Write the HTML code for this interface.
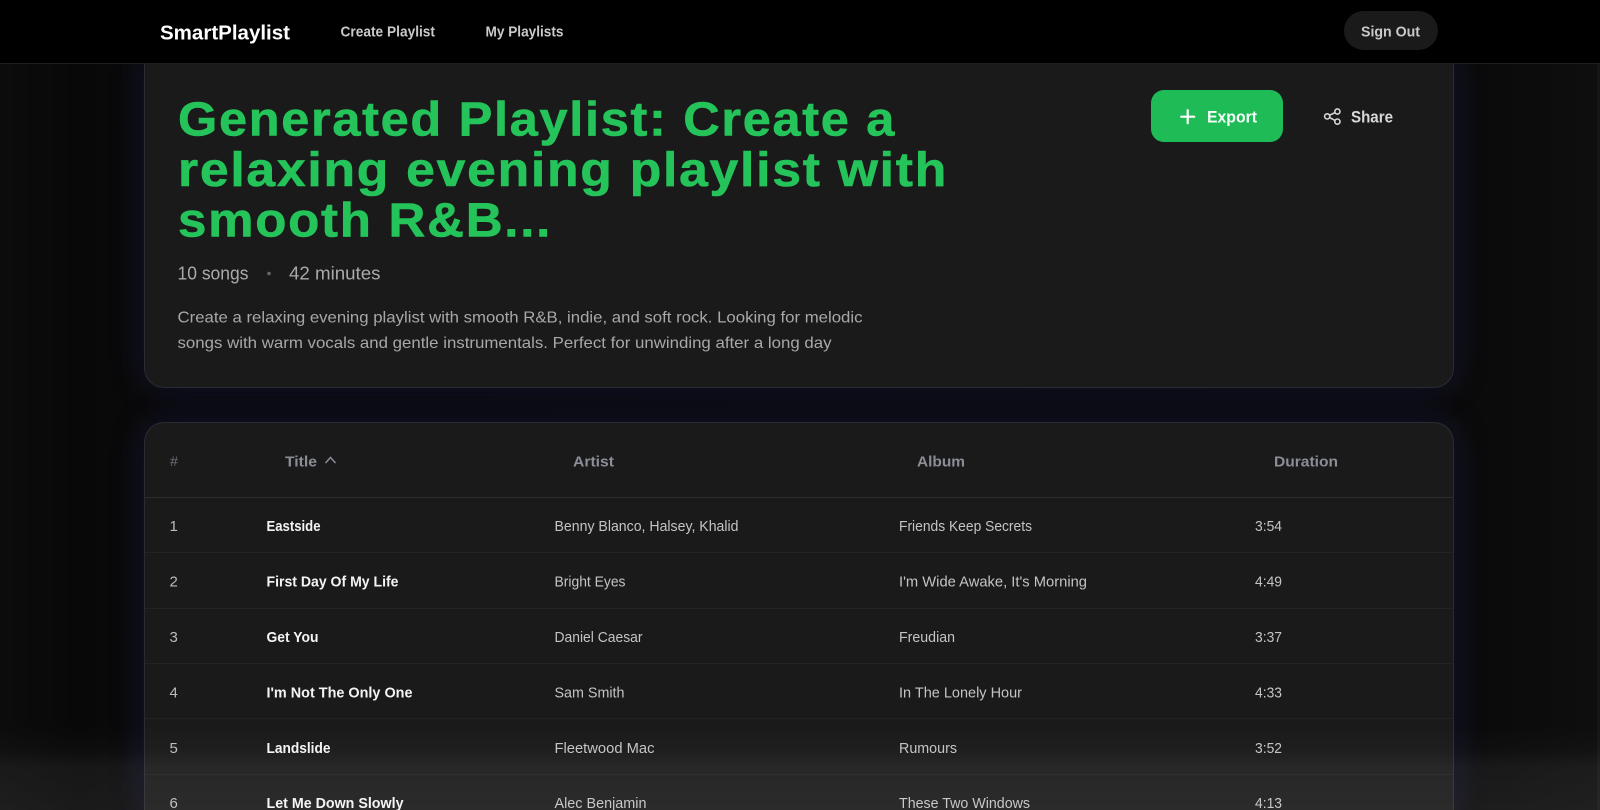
<!DOCTYPE html>
<html lang="en"><head><meta charset="utf-8"><title>SmartPlaylist</title>
<style>
html,body{margin:0;padding:0;width:1600px;height:810px;overflow:hidden;background:#0a0a0a}
body{position:relative;font-family:"Liberation Sans",sans-serif}
.bg{position:absolute;inset:0;background:linear-gradient(90deg,#0c0c0c 0,#080808 80px,#0a0a0a 140px,#0b0b0b 1500px,#0e0e0e 1597px,#151515 1597px)}
.card{position:absolute;left:144px;width:1310px;box-sizing:border-box;background:#1a1a1a;border:1px solid #2b2b33;border-radius:20px;box-shadow:0 0 34px rgba(45,45,150,.27)}
.nav{position:absolute;left:0;top:0;width:1600px;height:64px;background:#000;border-bottom:1px solid #1e1e1e;box-sizing:border-box}
.ov{position:absolute;left:0;top:725px;width:1600px;height:85px;background:linear-gradient(180deg,rgba(255,255,255,0) 0,rgba(255,255,255,.02) 25px,rgba(255,255,255,.06) 42px,rgba(255,255,255,.075) 85px)}
svg{position:absolute;left:0;top:0;overflow:hidden}
text{font-family:"Liberation Sans",sans-serif}
.t{font-weight:700;font-size:48px;fill:#25c45a;letter-spacing:1.6px;stroke:#25c45a;stroke-width:.6px}
.m{font-size:18px;fill:#aaaaaa}
.d{font-size:16px;fill:#a8a8a8}
.h{font-size:14.5px;font-weight:700;fill:#8b8e97}
.n{font-size:15px;fill:#bcbcbc}
.b{font-size:15px;font-weight:700;fill:#f4f4f4}
.r{font-size:15px;fill:#c4c4c4}
.nl{font-size:15px;font-weight:700;fill:#cacaca}
</style></head><body>
<div class="bg"></div>
<div class="card" style="top:44px;height:344px"></div>
<div class="card" style="top:422px;height:388px;border-bottom:0;border-radius:20px 20px 0 0"></div>
<svg width="1600" height="810" viewBox="0 0 1600 810" xmlns="http://www.w3.org/2000/svg">
<text class="t" x="178" y="135.5" textLength="718" lengthAdjust="spacingAndGlyphs">Generated Playlist: Create a</text>
<text class="t" x="178" y="186" textLength="770" lengthAdjust="spacingAndGlyphs">relaxing evening playlist with</text>
<text class="t" x="178" y="236.5" textLength="374" lengthAdjust="spacingAndGlyphs">smooth R&amp;B...</text>
<text class="m" x="177.5" y="279.5" textLength="71" lengthAdjust="spacingAndGlyphs">10 songs</text>
<circle cx="269" cy="273.5" r="1.8" fill="#666"/>
<text class="m" x="289" y="279.5" textLength="91.5" lengthAdjust="spacingAndGlyphs">42 minutes</text>
<text class="d" x="177.5" y="322.5" textLength="685" lengthAdjust="spacingAndGlyphs">Create a relaxing evening playlist with smooth R&amp;B, indie, and soft rock. Looking for melodic</text>
<text class="d" x="177.5" y="348" textLength="654" lengthAdjust="spacingAndGlyphs">songs with warm vocals and gentle instrumentals. Perfect for unwinding after a long day</text>

<rect x="1151" y="90" width="132" height="52" rx="13" fill="#1fbb57"/>
<path d="M1187.7 110.2v13M1181.2 116.7h13" stroke="#fff" stroke-width="2.2" stroke-linecap="round" fill="none"/>
<text x="1207" y="122.5" font-size="17" font-weight="700" fill="#f4fff8" textLength="50" lengthAdjust="spacingAndGlyphs">Export</text>
<g fill="none" stroke="#d6d6d6" stroke-width="1.6"><circle cx="1337.4" cy="111.5" r="2.6"/><circle cx="1327.2" cy="116.4" r="2.6"/><circle cx="1337.4" cy="121.6" r="2.6"/><path d="M1329.6 115.2l5.4-2.6M1329.6 117.6l5.4 2.8"/></g>
<text x="1351" y="122.5" font-size="17" font-weight="700" fill="#d8d8d8" textLength="42" lengthAdjust="spacingAndGlyphs">Share</text>

<text x="170" y="466" font-size="13.5" fill="#6d7078" textLength="8" lengthAdjust="spacingAndGlyphs">#</text>
<text class="h" x="285" y="466.5" textLength="32" lengthAdjust="spacingAndGlyphs">Title</text>
<path d="M325.5 463l5-5.5 5 5.5" stroke="#8b8e97" stroke-width="1.5" fill="none"/>
<text class="h" x="573" y="466.5" textLength="41" lengthAdjust="spacingAndGlyphs">Artist</text>
<text class="h" x="917" y="466.5" textLength="48" lengthAdjust="spacingAndGlyphs">Album</text>
<text class="h" x="1274" y="466.5" textLength="64" lengthAdjust="spacingAndGlyphs">Duration</text>

<g stroke-width="1">
<path d="M145 497.5H1453" stroke="#2e2e2e"/>
<path d="M145 552.5H1453M145 608.5H1453M145 663.5H1453M145 718.5H1453M145 774.5H1453" stroke="#232323"/>
</g>

<text class="n" x="169.5" y="531">1</text>
<text class="b" x="266.5" y="531" textLength="54" lengthAdjust="spacingAndGlyphs">Eastside</text>
<text class="r" x="554.5" y="531" textLength="184" lengthAdjust="spacingAndGlyphs">Benny Blanco, Halsey, Khalid</text>
<text class="r" x="899" y="531" textLength="133" lengthAdjust="spacingAndGlyphs">Friends Keep Secrets</text>
<text class="r" x="1255" y="531" textLength="27" lengthAdjust="spacingAndGlyphs">3:54</text>

<text class="n" x="169.5" y="586.5">2</text>
<text class="b" x="266.5" y="586.5" textLength="132" lengthAdjust="spacingAndGlyphs">First Day Of My Life</text>
<text class="r" x="554.5" y="586.5" textLength="71" lengthAdjust="spacingAndGlyphs">Bright Eyes</text>
<text class="r" x="899" y="586.5" textLength="188" lengthAdjust="spacingAndGlyphs">I'm Wide Awake, It's Morning</text>
<text class="r" x="1255" y="586.5" textLength="27" lengthAdjust="spacingAndGlyphs">4:49</text>

<text class="n" x="169.5" y="642">3</text>
<text class="b" x="266.5" y="642" textLength="52" lengthAdjust="spacingAndGlyphs">Get You</text>
<text class="r" x="554.5" y="642" textLength="88" lengthAdjust="spacingAndGlyphs">Daniel Caesar</text>
<text class="r" x="899" y="642" textLength="56" lengthAdjust="spacingAndGlyphs">Freudian</text>
<text class="r" x="1255" y="642" textLength="27" lengthAdjust="spacingAndGlyphs">3:37</text>

<text class="n" x="169.5" y="697.5">4</text>
<text class="b" x="266.5" y="697.5" textLength="146" lengthAdjust="spacingAndGlyphs">I'm Not The Only One</text>
<text class="r" x="554.5" y="697.5" textLength="70" lengthAdjust="spacingAndGlyphs">Sam Smith</text>
<text class="r" x="899" y="697.5" textLength="123" lengthAdjust="spacingAndGlyphs">In The Lonely Hour</text>
<text class="r" x="1255" y="697.5" textLength="27" lengthAdjust="spacingAndGlyphs">4:33</text>

<text class="n" x="169.5" y="753">5</text>
<text class="b" x="266.5" y="753" textLength="64" lengthAdjust="spacingAndGlyphs">Landslide</text>
<text class="r" x="554.5" y="753" textLength="100" lengthAdjust="spacingAndGlyphs">Fleetwood Mac</text>
<text class="r" x="899" y="753" textLength="58" lengthAdjust="spacingAndGlyphs">Rumours</text>
<text class="r" x="1255" y="753" textLength="27" lengthAdjust="spacingAndGlyphs">3:52</text>

<text class="n" x="169.5" y="808">6</text>
<text class="b" x="266.5" y="808" textLength="137" lengthAdjust="spacingAndGlyphs">Let Me Down Slowly</text>
<text class="r" x="554.5" y="808" textLength="92" lengthAdjust="spacingAndGlyphs">Alec Benjamin</text>
<text class="r" x="899" y="808" textLength="131" lengthAdjust="spacingAndGlyphs">These Two Windows</text>
<text class="r" x="1255" y="808" textLength="27" lengthAdjust="spacingAndGlyphs">4:13</text>
</svg>
<div class="ov"></div>
<div class="nav"></div>
<svg width="1600" height="64" viewBox="0 0 1600 64" xmlns="http://www.w3.org/2000/svg">
<text x="160" y="39.5" font-size="20" font-weight="700" fill="#fff" textLength="130" lengthAdjust="spacingAndGlyphs">SmartPlaylist</text>
<text class="nl" x="340.5" y="36.5" textLength="94.5" lengthAdjust="spacingAndGlyphs">Create Playlist</text>
<text class="nl" x="485.5" y="36.5" textLength="78" lengthAdjust="spacingAndGlyphs">My Playlists</text>
<rect x="1344" y="11" width="94" height="39" rx="19.5" fill="#1a1a1a"/>
<text class="nl" x="1361" y="36.5" textLength="59" lengthAdjust="spacingAndGlyphs">Sign Out</text>
</svg>
</body></html>
